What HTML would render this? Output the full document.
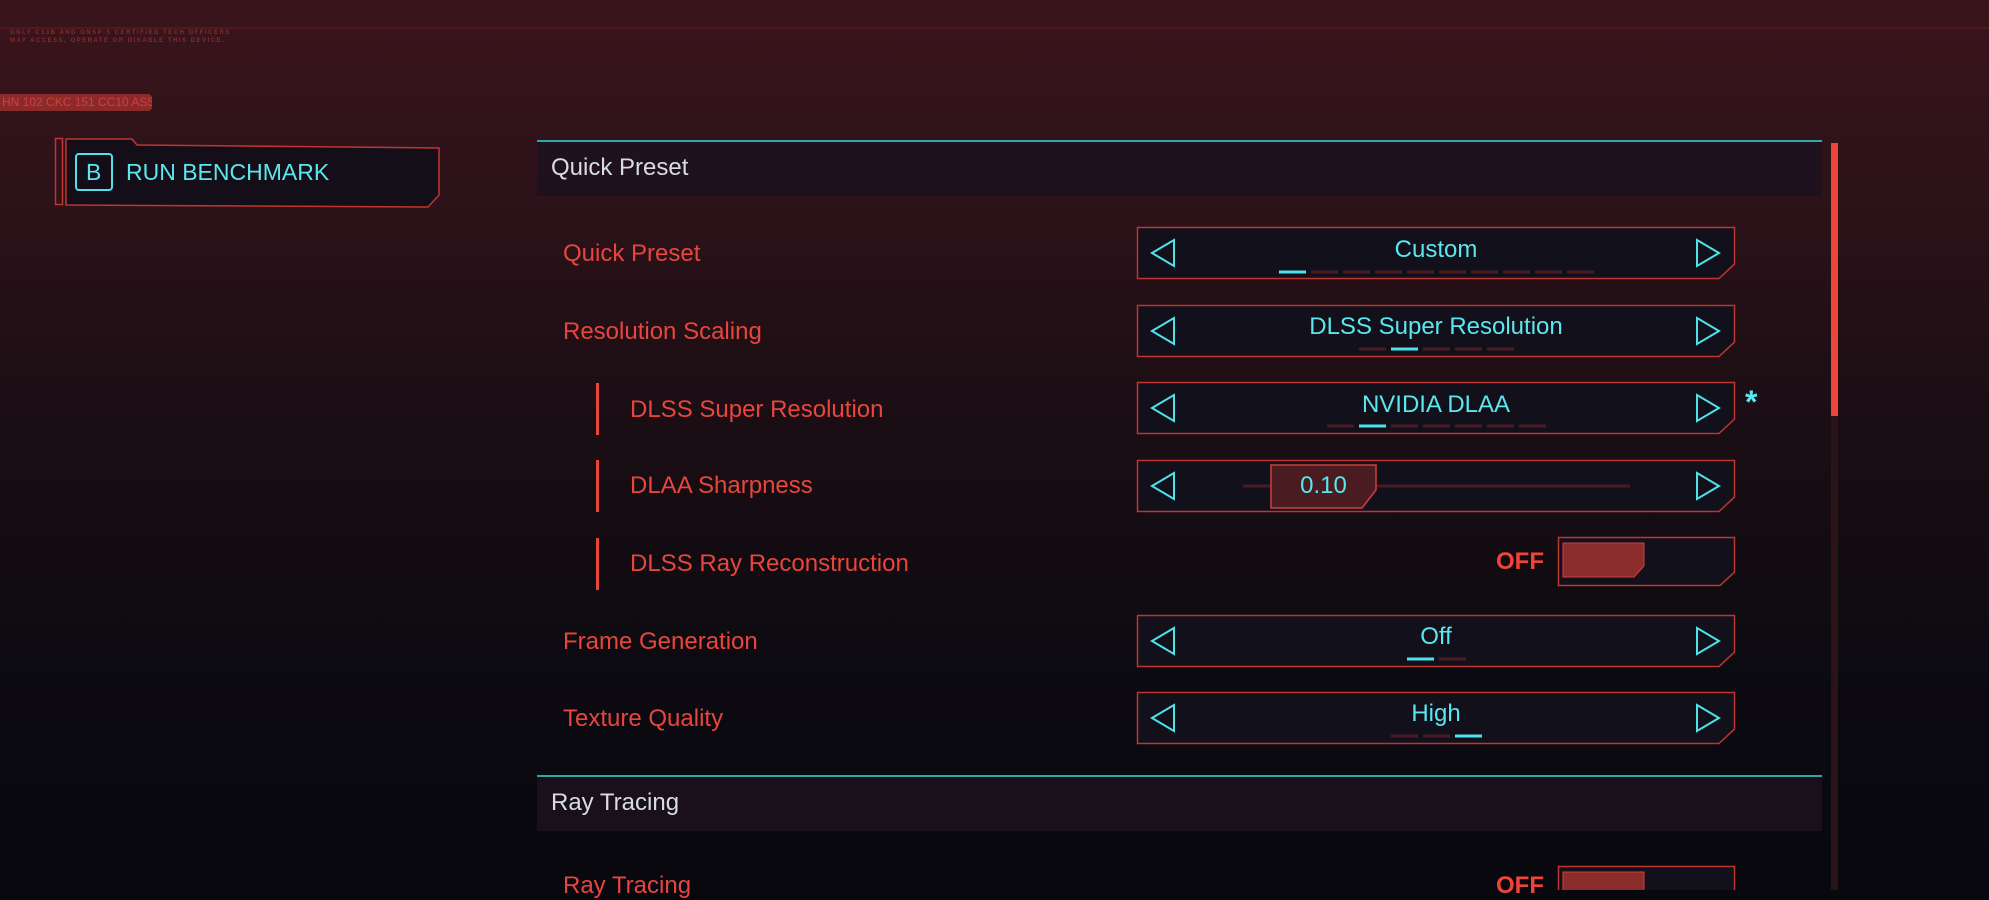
<!DOCTYPE html>
<html><head><meta charset="utf-8"><style>
*{margin:0;padding:0;box-sizing:border-box}
html,body{background:#08080e}
body{width:1989px;height:890px;overflow:hidden;position:relative;font-family:"Liberation Sans Narrow","Liberation Sans",sans-serif;background:linear-gradient(180deg,#3a141b 0px,#2c1219 200px,#1a0e14 420px,#0d0b11 650px,#08080e 890px)}
.a{position:absolute}
.lab{position:absolute;color:#e8453c;font-size:24px;line-height:28px;white-space:nowrap}
.hdr{position:absolute;left:537px;width:1285px;height:56px;border-top:2px solid #2aa9a8;background:rgba(28,18,30,.85);color:#d8dde0;font-size:24px;padding:12px 14px}
.val{position:absolute;left:1137px;width:598px;text-align:center;color:#5ce6ee;font-size:24px;line-height:28px}
.bar{position:absolute;left:596px;width:3px;height:52px;background:#e8453c}
</style></head><body>
<div class="a" style="left:0;top:27px;width:1989px;height:2px;background:#4e1a20"></div>
<div class="a" style="left:10px;top:29px;color:#8a2a2a;font-size:6px;letter-spacing:1.5px;line-height:8px;font-weight:bold;white-space:nowrap">ONLY C13B AND ONSP-5 CERTIFIED TECH OFFICERS<br>MAY ACCESS, OPERATE OR DISABLE THIS DEVICE.</div>
<div class="a" style="left:0;top:94px;width:152px;height:17px;background:#8c2a2a;border-radius:0 4px 4px 0;color:#d0403a;font-size:12px;line-height:17px;padding-left:2px;white-space:nowrap;overflow:hidden">HN 102 CKC 151 CC10 AS5</div>
<svg class="a" style="left:0;top:0" width="1989" height="890">
<rect x="55.5" y="138.5" width="7" height="66" fill="none" stroke="#c0352f" stroke-width="1.5"/>
<polygon points="66,139 132,139 137,145 439,148 439,195 428,207 66,205" fill="#140e18" stroke="#c0352f" stroke-width="1.5"/>
<rect x="76" y="154" width="36" height="36" rx="3" fill="none" stroke="#4ee2ea" stroke-width="2"/>
</svg>
<div class="a" style="left:86px;top:159px;color:#5ce6ee;font-size:23px">B</div>
<div class="a" style="left:126px;top:159px;color:#5ce6ee;font-size:23px;white-space:nowrap">RUN BENCHMARK</div>

<div class="hdr" style="top:140px">Quick Preset</div>
<div class="hdr" style="top:775px">Ray Tracing</div>
<div class="a" style="left:1831px;top:143px;width:7px;height:747px;background:#2a1418"></div>
<div class="a" style="left:1831px;top:143px;width:7px;height:273px;background:#ef4438"></div>

<div class="lab" style="left:563px;top:240px">Quick Preset</div>
<div class="lab" style="left:563px;top:318px">Resolution Scaling</div>
<div class="bar" style="top:383px"></div><div class="lab" style="left:630px;top:396px">DLSS Super Resolution</div>
<div class="bar" style="top:460px"></div><div class="lab" style="left:630px;top:472px">DLAA Sharpness</div>
<div class="bar" style="top:538px"></div><div class="lab" style="left:630px;top:550px">DLSS Ray Reconstruction</div>
<div class="lab" style="left:563px;top:628px">Frame Generation</div>
<div class="lab" style="left:563px;top:705px">Texture Quality</div>
<div class="lab" style="left:563px;top:872px">Ray Tracing</div>

<svg class="a" style="left:0;top:0" width="1989" height="890">
<defs>
<g id="box"><polygon points="0.5,0.5 597.5,0.5 597.5,37 582,51.5 0.5,51.5" fill="#11101b" stroke="#c0352f" stroke-width="1.5"/>
<polygon points="37,13 15,26 37,39" fill="none" stroke="#4ee2ea" stroke-width="2"/>
<polygon points="560,13 582,26 560,39" fill="none" stroke="#4ee2ea" stroke-width="2"/></g>
<g id="tog"><polygon points="0.5,0.5 176.5,0.5 176.5,35 162,48.5 0.5,48.5" fill="#11101b" stroke="#c0352f" stroke-width="1.5"/>
<polygon points="5,6 86,6 86,29 76,40 5,40" fill="#8a2c2c" stroke="#d0403a" stroke-width="1"/></g>
</defs>
<use href="#box" x="1137" y="227"/>
<use href="#box" x="1137" y="305"/>
<use href="#box" x="1137" y="382"/>
<use href="#box" x="1137" y="460"/>
<use href="#box" x="1137" y="615"/>
<use href="#box" x="1137" y="692"/>
<use href="#tog" x="1558" y="537"/>
<use href="#tog" x="1558" y="866"/>
<g stroke-width="3">
<line x1="1279" y1="272" x2="1306" y2="272" stroke="#4ee2ea"/>
<g stroke="#4a1c22"><line x1="1311" y1="272" x2="1338" y2="272"/><line x1="1343" y1="272" x2="1370" y2="272"/><line x1="1375" y1="272" x2="1402" y2="272"/><line x1="1407" y1="272" x2="1434" y2="272"/><line x1="1439" y1="272" x2="1466" y2="272"/><line x1="1471" y1="272" x2="1498" y2="272"/><line x1="1503" y1="272" x2="1530" y2="272"/><line x1="1535" y1="272" x2="1562" y2="272"/><line x1="1567" y1="272" x2="1594" y2="272"/></g>
<g stroke="#4a1c22"><line x1="1359" y1="349" x2="1386" y2="349"/><line x1="1423" y1="349" x2="1450" y2="349"/><line x1="1455" y1="349" x2="1482" y2="349"/><line x1="1487" y1="349" x2="1514" y2="349"/></g>
<line x1="1391" y1="349" x2="1418" y2="349" stroke="#4ee2ea"/>
<g stroke="#4a1c22"><line x1="1327" y1="426" x2="1354" y2="426"/><line x1="1391" y1="426" x2="1418" y2="426"/><line x1="1423" y1="426" x2="1450" y2="426"/><line x1="1455" y1="426" x2="1482" y2="426"/><line x1="1487" y1="426" x2="1514" y2="426"/><line x1="1519" y1="426" x2="1546" y2="426"/></g>
<line x1="1359" y1="426" x2="1386" y2="426" stroke="#4ee2ea"/>
<line x1="1407" y1="659" x2="1434" y2="659" stroke="#4ee2ea"/>
<line x1="1439" y1="659" x2="1466" y2="659" stroke="#4a1c22"/>
<g stroke="#4a1c22"><line x1="1391" y1="736" x2="1418" y2="736"/><line x1="1423" y1="736" x2="1450" y2="736"/></g>
<line x1="1455" y1="736" x2="1482" y2="736" stroke="#4ee2ea"/>
</g>
<line x1="1243" y1="486" x2="1630" y2="486" stroke="#4a1c22" stroke-width="3"/>
<polygon points="1271,465 1376,465 1376,490 1362,508 1271,508" fill="#4a1c22" stroke="#d0403a" stroke-width="1.5"/>
</svg>
<div class="val" style="top:236px">Custom</div>
<div class="val" style="top:313px">DLSS Super Resolution</div>
<div class="val" style="top:391px">NVIDIA DLAA</div>
<div class="a" style="left:1271px;top:472px;width:105px;text-align:center;color:#5ce6ee;font-size:24px;line-height:28px">0.10</div>
<div class="val" style="top:623px">Off</div>
<div class="val" style="top:700px">High</div>
<div class="a" style="left:1745px;top:384px;color:#5ce6ee;font-size:32px;font-weight:bold">*</div>
<div class="a" style="left:1496px;top:548px;color:#ef4438;font-size:24px;font-weight:bold;line-height:28px">OFF</div>
<div class="a" style="left:1496px;top:872px;color:#ef4438;font-size:24px;font-weight:bold;line-height:28px">OFF</div>
</body></html>
